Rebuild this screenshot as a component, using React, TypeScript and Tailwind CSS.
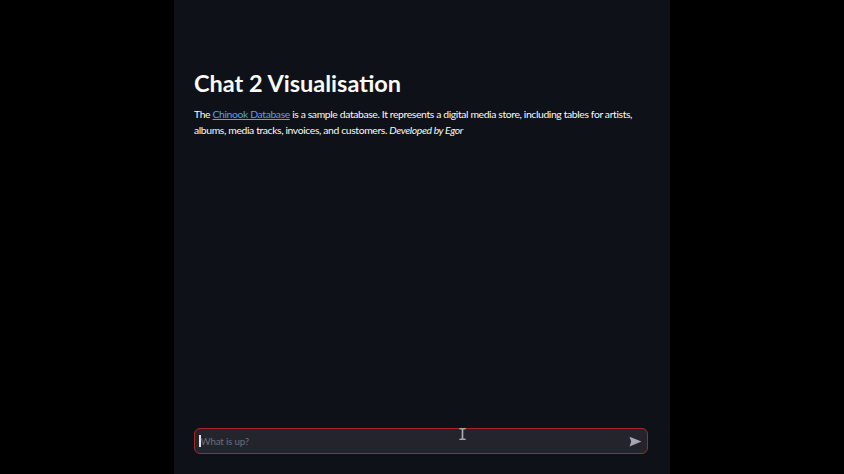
import React from "react";

export default function App() {
  return (
    <div className="w-[844px] h-[474px] bg-black flex justify-center overflow-hidden" style={{ fontFamily: 'Lato, "Noto Sans", sans-serif' }}>
      <div className="w-[496px] h-full bg-[#0e1117] flex flex-col pl-[20px] pr-[22px]">
        <h1 className="mt-[68px] text-[23.5px] leading-[30px] font-bold text-[#fafafa]">Chat 2 Visualisation</h1>
        <p className="mt-[8px] text-[10.4px] leading-[16px] tracking-[-0.38px] text-[#fafafa]">
          The <a className="text-[#5aa0ea] underline">Chinook Database</a> is a sample database. It represents a digital media store, including tables for artists, albums, media tracks, invoices, and customers. <em>Developed by Egor</em>
        </p>
        <div className="flex-1" />
        <div className="relative mb-[20px] h-[26px] rounded-[6px] border border-[#a3282c] bg-[#24252c] flex items-center pl-[4px] pr-[5px]">
          <div className="w-[1.5px] h-[12px] bg-[#e6e6e6]" />
          <span className="text-[9.8px] tracking-[-0.2px] text-[#6b6e78] flex-1">What is up?</span>
          <svg width="13" height="11" viewBox="0 0 24 20">
            <path d="M1 1 L23 10 L1 19 L4 10 Z" fill="#a3a7b3" />
          </svg>
          <svg className="absolute left-[264px] top-[-1px]" width="7" height="12" viewBox="0 0 7 12">
            <path d="M0.5 0.5 H6.5 M3.5 0.5 V11.5 M0.5 11.5 H6.5" stroke="#fff" strokeWidth="1.4" />
            <path d="M0.5 0.5 H6.5 M3.5 0.5 V11.5 M0.5 11.5 H6.5" stroke="#333" strokeWidth="0.4" />
          </svg>
        </div>
      </div>
    </div>
  );
}
